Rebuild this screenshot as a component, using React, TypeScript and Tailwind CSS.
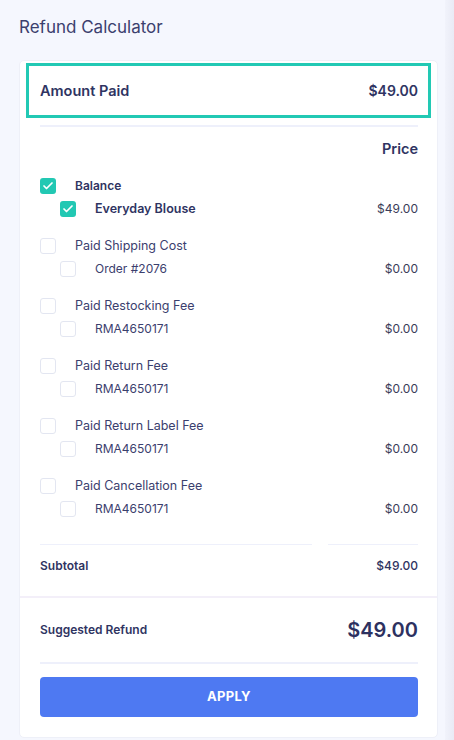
import { Check } from 'lucide-react';

type Line = { parent: string; child: string; price: string; checked?: boolean };

const lines: Line[] = [
  { parent: 'Balance', child: 'Everyday Blouse', price: '$49.00', checked: true },
  { parent: 'Paid Shipping Cost', child: 'Order #2076', price: '$0.00' },
  { parent: 'Paid Restocking Fee', child: 'RMA4650171', price: '$0.00' },
  { parent: 'Paid Return Fee', child: 'RMA4650171', price: '$0.00' },
  { parent: 'Paid Return Label Fee', child: 'RMA4650171', price: '$0.00' },
  { parent: 'Paid Cancellation Fee', child: 'RMA4650171', price: '$0.00' },
];

function Box({ checked }: { checked?: boolean }) {
  if (checked) {
    return (
      <span className="h-4 w-4 shrink-0 rounded-[3px] bg-[#22c8b3] flex items-center justify-center">
        <Check className="h-3 w-3 text-white" strokeWidth={3.5} />
      </span>
    );
  }
  return <span className="h-4 w-4 shrink-0 rounded-[3px] border border-[#e3e6f1] bg-white" />;
}

export default function App() {
  return (
    <div
      className="min-h-[740px] bg-[#f5f7fe] flex text-[#2f3462]"
      style={{ fontFamily: 'Inter, "Noto Sans", sans-serif' }}
    >
      <div className="w-[438px] pl-[19px]">
        <h1 className="pt-[15px] h-[60px] text-[17px] leading-6 text-[#3b406e]">Refund Calculator</h1>

        <div className="bg-white border border-[#eef0f8] rounded-[5px] pb-[20px]">
          <div className="px-[6px] pt-[2px]">
            <div className="h-[55px] border-[3px] border-[#22c9b4] flex items-center justify-between pl-[11px] pr-[10px]">
              <span className="text-[14.5px] font-semibold">Amount Paid</span>
              <span className="text-[14px] font-semibold">$49.00</span>
            </div>
          </div>

          <div className="pl-[20px] pr-[19px]">
            <div className="mt-[7px] h-[2px] bg-[#eef0fb]" />
            <div className="mt-[12px] h-5 text-right text-[14.5px] font-semibold leading-5">Price</div>

            <div className="mt-[19px] flex flex-col gap-[21px]">
              {lines.map((line, i) => (
                <div key={i} className="flex flex-col gap-[7px]">
                  <div className="h-4 flex items-center">
                    <Box checked={line.checked} />
                    <span
                      className={
                        line.checked
                          ? 'ml-[19px] text-[12px] font-semibold'
                          : 'ml-[19px] text-[12.5px] text-[#3b406e]'
                      }
                    >
                      {line.parent}
                    </span>
                  </div>
                  <div className="h-4 flex items-center pl-[20px]">
                    <Box checked={line.checked} />
                    <span
                      className={
                        line.checked
                          ? 'ml-[19px] text-[12.5px] font-semibold'
                          : 'ml-[19px] text-[12px] text-[#3b406e]'
                      }
                    >
                      {line.child}
                    </span>
                    <span className="ml-auto text-[12px] text-[#3a3c58]">{line.price}</span>
                  </div>
                </div>
              ))}
            </div>

            <div className="mt-[27px] flex gap-[16px]">
              <div className="flex-1 h-px bg-[#eef0fb]" />
              <div className="w-[90px] h-px bg-[#eef0fb]" />
            </div>
            <div className="h-[42px] flex items-center justify-between">
              <span className="text-[12px] font-semibold">Subtotal</span>
              <span className="text-[12px] font-medium">$49.00</span>
            </div>
          </div>

          <div className="mt-[9px] h-[2px] bg-[#f3eff9]" />

          <div className="pl-[20px] pr-[19px]">
            <div className="h-[64px] flex items-center justify-between">
              <span className="text-[12px] font-semibold">Suggested Refund</span>
              <span className="text-[20px] font-semibold text-[#2d3160]">$49.00</span>
            </div>
            <div className="h-[2px] bg-[#eef0fb]" />
            <button className="mt-[13px] w-full h-[40px] rounded-[4px] bg-[#4e79f2] text-white text-[13px] font-bold tracking-wide">
              APPLY
            </button>
          </div>
        </div>
      </div>
      <div className="ml-auto w-[9px] bg-gradient-to-r from-[#f1f3fb] to-[#e9ebf5]" />
    </div>
  );
}
